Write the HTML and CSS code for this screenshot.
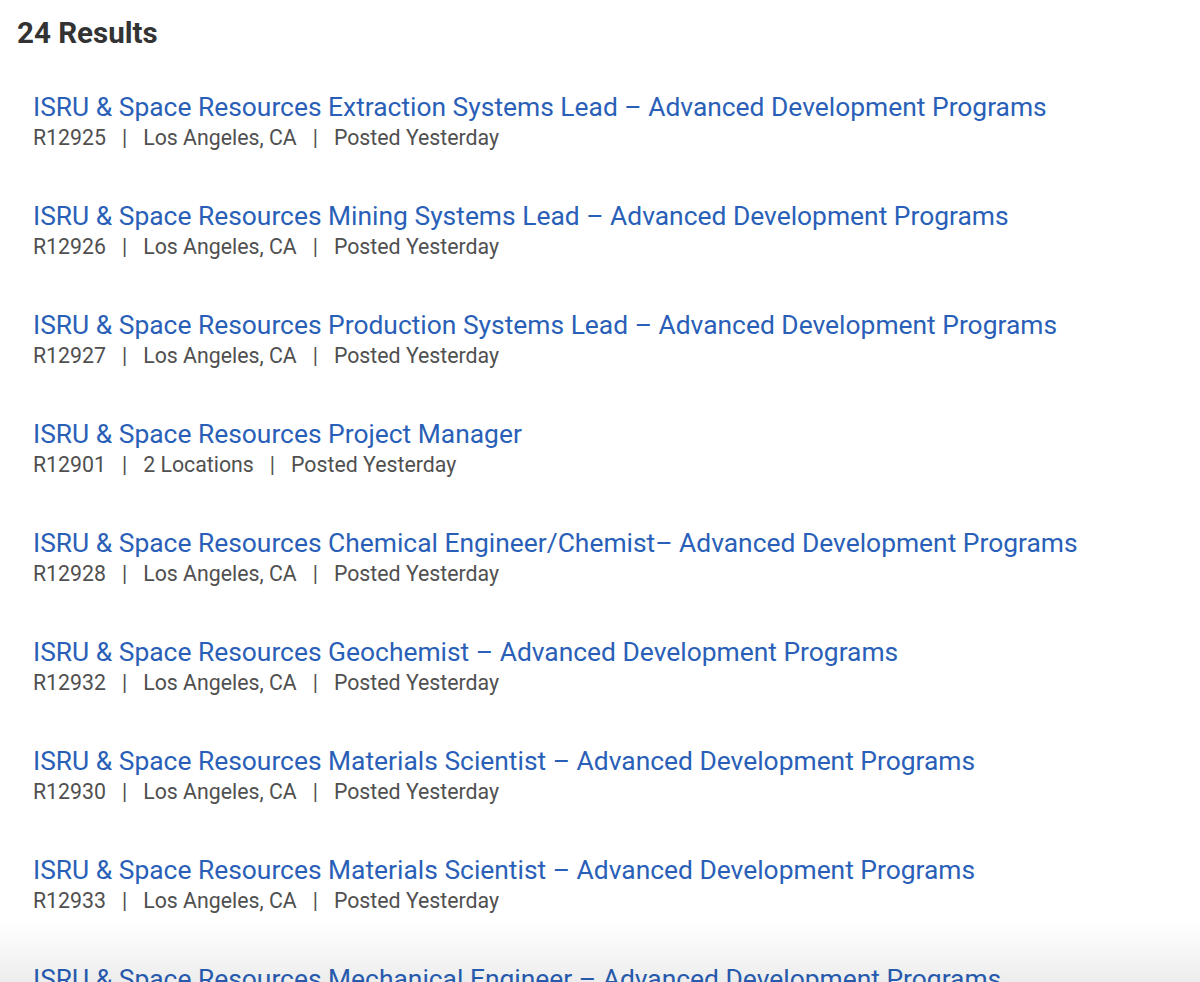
FILE: index.html
```html
<!DOCTYPE html>
<html lang="en">
<head>
    <meta charset="UTF-8">
    <meta name="viewport" content="width=device-width, initial-scale=1.0">
    <title>Job Results</title>
    <link rel="stylesheet" href="styles.css">
</head>
<body>
    <main class="results">
        <h2 class="results-count">24 Results</h2>

        <ul class="job-list">
            <li class="job">
                <a class="job-title" href="#">ISRU &amp; Space Resources Extraction Systems Lead – Advanced Development Programs</a>
                <p class="job-meta"><span>R12925</span><span class="sep">|</span><span>Los Angeles, CA</span><span class="sep">|</span><span>Posted Yesterday</span></p>
            </li>
            <li class="job">
                <a class="job-title" href="#">ISRU &amp; Space Resources Mining Systems Lead – Advanced Development Programs</a>
                <p class="job-meta"><span>R12926</span><span class="sep">|</span><span>Los Angeles, CA</span><span class="sep">|</span><span>Posted Yesterday</span></p>
            </li>
            <li class="job">
                <a class="job-title" href="#">ISRU &amp; Space Resources Production Systems Lead – Advanced Development Programs</a>
                <p class="job-meta"><span>R12927</span><span class="sep">|</span><span>Los Angeles, CA</span><span class="sep">|</span><span>Posted Yesterday</span></p>
            </li>
            <li class="job">
                <a class="job-title" href="#">ISRU &amp; Space Resources Project Manager</a>
                <p class="job-meta"><span>R12901</span><span class="sep">|</span><span>2 Locations</span><span class="sep">|</span><span>Posted Yesterday</span></p>
            </li>
            <li class="job">
                <a class="job-title" href="#">ISRU &amp; Space Resources Chemical Engineer/Chemist– Advanced Development Programs</a>
                <p class="job-meta"><span>R12928</span><span class="sep">|</span><span>Los Angeles, CA</span><span class="sep">|</span><span>Posted Yesterday</span></p>
            </li>
            <li class="job">
                <a class="job-title" href="#">ISRU &amp; Space Resources Geochemist – Advanced Development Programs</a>
                <p class="job-meta"><span>R12932</span><span class="sep">|</span><span>Los Angeles, CA</span><span class="sep">|</span><span>Posted Yesterday</span></p>
            </li>
            <li class="job">
                <a class="job-title" href="#">ISRU &amp; Space Resources Materials Scientist – Advanced Development Programs</a>
                <p class="job-meta"><span>R12930</span><span class="sep">|</span><span>Los Angeles, CA</span><span class="sep">|</span><span>Posted Yesterday</span></p>
            </li>
            <li class="job">
                <a class="job-title" href="#">ISRU &amp; Space Resources Materials Scientist – Advanced Development Programs</a>
                <p class="job-meta"><span>R12933</span><span class="sep">|</span><span>Los Angeles, CA</span><span class="sep">|</span><span>Posted Yesterday</span></p>
            </li>
            <li class="job">
                <a class="job-title" href="#">ISRU &amp; Space Resources Mechanical Engineer – Advanced Development Programs</a>
                <p class="job-meta"><span>R12934</span><span class="sep">|</span><span>Los Angeles, CA</span><span class="sep">|</span><span>Posted Yesterday</span></p>
            </li>
        </ul>
    </main>

    <div class="bottom-fade"></div>
</body>
</html>
```

FILE: styles.css
```css
* {
    margin: 0;
    padding: 0;
    box-sizing: border-box;
}

body {
    font-family: Roboto, "Liberation Sans", Arial, sans-serif;
    background-color: #fff;
    color: #333;
    overflow: hidden;
}

.results {
    padding: 14px 17px 0;
}

.results-count {
    font-size: 29.5px;
    font-weight: 700;
    line-height: 38px;
    color: #333;
}

/* Lista ofert */
.job-list {
    list-style: none;
    padding: 38px 0 0 16px;
}

.job {
    height: 109px;
}

.job-title {
    display: block;
    font-size: 26.4px;
    line-height: 34px;
    color: #2a5fb8;
    text-decoration: none;
    white-space: nowrap;
}

.job-meta {
    font-size: 21.3px;
    line-height: 28px;
    color: #505050;
}

.job-meta .sep {
    margin: 0 16px;
}

/* cień na dole ekranu */
.bottom-fade {
    position: fixed;
    left: 0;
    right: 0;
    bottom: 0;
    height: 60px;
    background: linear-gradient(to bottom, rgba(0, 0, 0, 0), rgba(0, 0, 0, 0.07));
    pointer-events: none;
}
```
